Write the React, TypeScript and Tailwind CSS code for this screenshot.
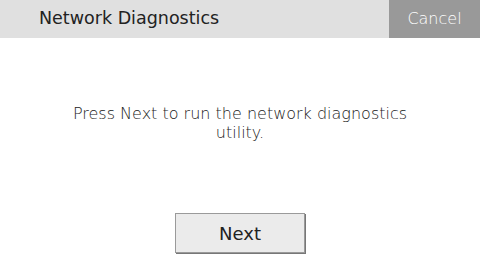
export default function App() {
  return (
    <div className="w-[480px] h-[263px] bg-white flex flex-col" style={{ fontFamily: '"DejaVu Sans", sans-serif' }}>
      <div className="h-[38px] bg-[#e0e0e0] flex items-stretch">
        <div className="flex-1 flex items-center pl-[39px] pb-[1px] text-[17.5px] text-[#222]">Network Diagnostics</div>
        <button className="w-[91px] bg-[#999999] text-white font-extralight text-[16px] flex items-center justify-center">
          Cancel
        </button>
      </div>
      <div className="flex-1 flex flex-col items-center">
        <p className="mt-[66px] w-[360px] text-center text-[16px] leading-[19px] font-extralight text-[#222]">
          Press Next to run the network diagnostics utility.
        </p>
        <button className="mt-[71px] w-[130px] h-[40px] bg-[#ebebeb] border border-[#9a9a9a] shadow-[1px_1px_0_#777] text-[18px] text-[#222] flex items-center justify-center">
          Next
        </button>
      </div>
    </div>
  );
}
